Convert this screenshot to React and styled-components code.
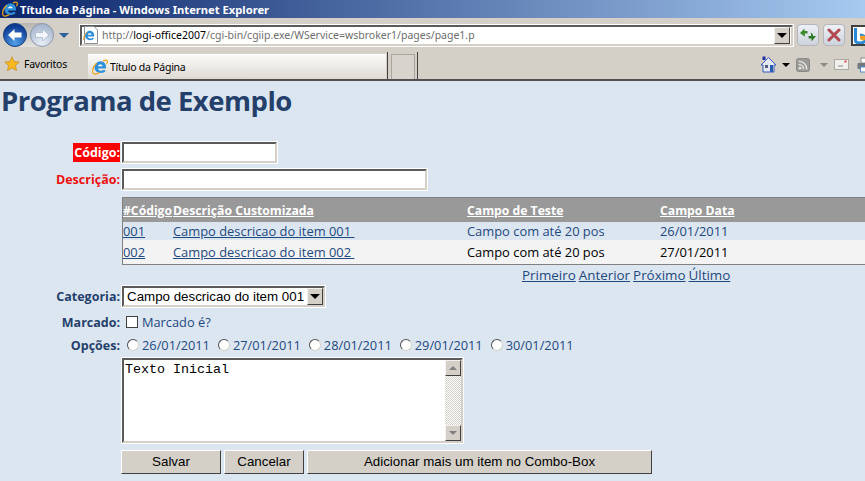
import React from "react";
import styled, { createGlobalStyle } from "styled-components";

const Global = createGlobalStyle`
  html, body { margin: 0; padding: 0; overflow: hidden; background: #dce6f1; }
`;

const IeLogo = ({ size = 16 }) => (
  <svg width={size} height={size} viewBox="0 0 16 16">
    <path d="M14 9.5H6C6.2 12 10 12.6 12 10.8L13.8 12C11 15.4 3.6 14.4 2.6 9.4C2 5.6 5 2.2 8.6 2.2C12 2.2 14.6 5 14 9.5Z" fill="#2f8fd8" />
    <path d="M6 7.2H10.6C10.4 4.8 6.4 4.8 6 7.2Z" fill="#fff" />
    <path d="M4.6 4.2C2 6.6 .2 10.6 .8 13.8C1.4 15.8 4.4 15.4 7.4 13.6M11 2C12.6 1 15.2 .4 15.4 2.4C15.5 3.4 15 4.4 14.6 5.2" fill="none" stroke="#eda31e" strokeWidth="1.2" />
  </svg>
);

const NavArrow = ({ back }) => (
  <svg width="24" height="24" viewBox="0 0 24 24">
    <defs>
      <radialGradient id="navBack" cx="50%" cy="85%" r="75%">
        <stop offset="0%" stopColor="#4f9fe8" />
        <stop offset="100%" stopColor="#0b3a92" />
      </radialGradient>
      <radialGradient id="navFwd" cx="50%" cy="85%" r="75%">
        <stop offset="0%" stopColor="#e8eef6" />
        <stop offset="100%" stopColor="#a9b8d0" />
      </radialGradient>
    </defs>
    <circle cx="12" cy="12" r="11.5" fill={back ? "url(#navBack)" : "url(#navFwd)"} stroke={back ? "#1c3f80" : "#8f99a8"} />
    <path
      d={back ? "M5 12L11.5 6V9.6H18.5V14.4H11.5V18Z" : "M19 12L12.5 6V9.6H5.5V14.4H12.5V18Z"}
      fill={back ? "#fff" : "#f4f7fb"}
      stroke={back ? "none" : "#9fb0c8"}
      strokeWidth="0.7"
    />
  </svg>
);

const PageIcon = () => (
  <svg width="16" height="18" viewBox="0 0 16 18">
    <path d="M1.5 .5H11L14.5 4V17.5H1.5Z" fill="#fff" stroke="#8a8f98" />
    <g transform="translate(0 3) scale(.8)">
      <path d="M14 9.5H6C6.2 12 10 12.6 12 10.8L13.8 12C11 15.4 3.6 14.4 2.6 9.4C2 5.6 5 2.2 8.6 2.2C12 2.2 14.6 5 14 9.5Z" fill="#2f8fd8" />
      <path d="M6 7.2H10.6C10.4 4.8 6.4 4.8 6 7.2Z" fill="#fff" />
      <path d="M4.6 4.2C2 6.6 .2 10.6 .8 13.8" fill="none" stroke="#f0a020" strokeWidth="1.2" />
    </g>
  </svg>
);

const RefreshIcon = () => (
  <svg width="18" height="16" viewBox="0 0 18 16">
    <path d="M1 6L5.5 1.5V4H8.5V6.5H6C5.6 7.2 5.8 8.4 6.4 9.6C4.6 9 4 7.6 4.4 6.4H4L5.5 9.5Z" fill="#3a8a2c" />
    <path d="M17 9L12.5 14.5V11.5H9.6V9H12C12.4 8 12.2 6.8 11.6 5.6C13.6 6.4 14.2 7.8 14 9Z" fill="#2d7a24" />
  </svg>
);

const StopIcon = () => (
  <svg width="14" height="14" viewBox="0 0 14 14">
    <path d="M2 2L12 12M12 2L2 12" stroke="#b04a50" strokeWidth="3" strokeLinecap="round" />
  </svg>
);

const Star = () => (
  <svg width="16" height="16" viewBox="0 0 16 16">
    <path d="M8 .8L10.1 5.6L15.3 6.1L11.4 9.5L12.6 14.7L8 12L3.4 14.7L4.6 9.5L.7 6.1L5.9 5.6Z" fill="#f8b820" stroke="#c88a18" strokeWidth=".7" />
  </svg>
);

const HomeIcon = () => (
  <svg width="17" height="17" viewBox="0 0 17 17">
    <path d="M8.5 1.5L16 9H14V16H3V9H1Z" fill="#e4e8f2" stroke="#3a58b8" />
    <rect x="2.5" y="0.5" width="3" height="3.5" fill="#2030a8" />
    <rect x="10" y="9" width="3" height="7" fill="#2a5cb0" />
    <rect x="5" y="9" width="3" height="3" fill="#50607a" />
  </svg>
);

const RssIcon = () => (
  <svg width="14" height="14" viewBox="0 0 14 14">
    <rect x=".5" y=".5" width="13" height="13" rx="2" fill="#9a9a96" stroke="#8a8a86" />
    <circle cx="4" cy="10.2" r="1.4" fill="#e2e0da" />
    <path d="M2.6 6.4C5.4 6.4 7.6 8.6 7.6 11.4M2.6 3.2C7.2 3.2 10.8 6.8 10.8 11.4" fill="none" stroke="#e2e0da" strokeWidth="1.5" />
  </svg>
);

const MailIcon = () => (
  <svg width="15" height="11" viewBox="0 0 15 11">
    <rect x=".5" y=".5" width="14" height="10" fill="#f0efec" stroke="#a8a8a4" />
    <path d="M4 7H9" stroke="#8a8a86" />
    <rect x="10.5" y="1.5" width="2" height="2" fill="#d84040" />
  </svg>
);

const PrintIcon = () => (
  <svg width="16" height="16" viewBox="0 0 16 16">
    <rect x="4" y="1" width="8" height="5" fill="#fff" stroke="#8a8a86" />
    <rect x=".5" y="6" width="15" height="6" rx="1" fill="#707880" />
    <rect x="3.5" y="10" width="9" height="5" fill="#fff" stroke="#5a8ac0" />
  </svg>
);

const BingIcon = () => (
  <svg width="16" height="18" viewBox="0 0 16 18">
    <path d="M2.5 1V14C2.5 16.5 10 16.5 11.5 14.5C13.5 12 12 8 7 8" fill="none" stroke="#2a8ad8" strokeWidth="3" />
    <ellipse cx="10" cy="11" rx="3" ry="2.4" fill="#f0a020" />
  </svg>
);

const App = () => (
  <Window>
    <Global />
    <TitleBar>
      <IeLogo />
      <TitleText>Título da Página - Windows Internet Explorer</TitleText>
    </TitleBar>
    <NavBar>
      <NavPill>
        <NavArrow back />
        <NavArrow />
      </NavPill>
      <Caret color="#2d5f98" />
      <AddressBar>
        <PageIcon />
        <Url>
          http://<strong>logi-office2007</strong>/cgi-bin/cgiip.exe/WService=wsbroker1/pages/page1.p
        </Url>
        <ComboButton>
          <Caret color="#000" />
        </ComboButton>
      </AddressBar>
      <RoundButton>
        <RefreshIcon />
      </RoundButton>
      <RoundButton>
        <StopIcon />
      </RoundButton>
      <BingBox>
        <BingIcon />
      </BingBox>
    </NavBar>
    <TabBar>
      <Favorites>
        <Star />
        <span>Favoritos</span>
      </Favorites>
      <Tab>
        <IeLogo />
        <span>Título da Página</span>
      </Tab>
      <NewTab />
      <CommandBar>
        <CommandItem><HomeIcon /></CommandItem>
        <CommandItem $left={5}><Caret color="#000" small /></CommandItem>
        <CommandItem $left={6}><RssIcon /></CommandItem>
        <CommandItem $left={10}><Caret color="#8a8a86" small /></CommandItem>
        <CommandItem $left={6}><MailIcon /></CommandItem>
        <CommandItem $left={8}><PrintIcon /></CommandItem>
      </CommandBar>
    </TabBar>
    <Page>
      <Heading>Programa de Exemplo</Heading>
      <Row $top={25}>
        <Label><Flag>Código:</Flag></Label>
        <Input $width={155} />
      </Row>
      <Row $top={6}>
        <Label $error>Descrição:</Label>
        <Input $width={305} />
      </Row>
      <Row $top={7}>
        <Label />
        <Grid>
          <thead>
            <tr>
              <Th $width={50}>#Código</Th>
              <Th $width={294}>Descrição Customizada</Th>
              <Th $width={193}>Campo de Teste</Th>
              <Th>Campo Data</Th>
            </tr>
          </thead>
          <tbody>
            {rows.map((row) => (
              <Tr key={row.code} $alt={row.alt}>
                <Td><Link>{row.code}</Link></Td>
                <Td><Link>{row.name}&nbsp;</Link></Td>
                <Td>Campo com até 20 pos</Td>
                <Td>{row.date}</Td>
              </Tr>
            ))}
          </tbody>
        </Grid>
      </Row>
      <Pager>
        <Link>Primeiro</Link>
        <Link>Anterior</Link>
        <Link>Próximo</Link>
        <Link>Último</Link>
      </Pager>
      <Row $top={2}>
        <Label>Categoria:</Label>
        <SelectBox>
          <span>Campo descricao do item 001</span>
          <ComboButton>
            <Caret color="#000" />
          </ComboButton>
        </SelectBox>
      </Row>
      <Row $top={6}>
        <Label>Marcado:</Label>
        <CheckBox />
        <Option>Marcado é?</Option>
      </Row>
      <Row $top={4}>
        <Label>Opções:</Label>
        <Radios>
          {dates.map((date) => (
            <RadioItem key={date}>
              <Radio />
              <Option>{date}</Option>
            </RadioItem>
          ))}
        </Radios>
      </Row>
      <Row $top={3}>
        <Label />
        <TextArea>
          <TextValue>Texto Inicial</TextValue>
          <ScrollTrack>
            <ScrollButton><Tri /></ScrollButton>
            <ScrollButton><Tri $down /></ScrollButton>
          </ScrollTrack>
        </TextArea>
      </Row>
      <Buttons>
        <Button $width={100}>Salvar</Button>
        <Button $width={80}>Cancelar</Button>
        <Button $width={345}>Adicionar mais um item no Combo-Box</Button>
      </Buttons>
    </Page>
  </Window>
);

export default App;

const rows = [
  { code: "001", name: "Campo descricao do item 001", date: "26/01/2011" },
  { code: "002", name: "Campo descricao do item 002", date: "27/01/2011", alt: true },
];

const dates = ["26/01/2011", "27/01/2011", "28/01/2011", "29/01/2011", "30/01/2011"];

const chrome = `"Noto Sans", sans-serif`;
const body = `"Open Sans", sans-serif`;
const navy = "#24406a";

const Window = styled.div`
  width: 865px;
  height: 481px;
  overflow: hidden;
  display: flex;
  flex-direction: column;
  background: #dce6f1;
`;

const TitleBar = styled.div`
  height: 18px;
  flex: none;
  display: flex;
  align-items: center;
  gap: 2px;
  padding-left: 2px;
  background: linear-gradient(90deg, #0a246a, #a6caf0);
`;

const TitleText = styled.span`
  font: bold 11.2px ${chrome};
  color: #fff;
`;

const NavBar = styled.div`
  height: 34px;
  flex: none;
  display: flex;
  align-items: center;
  background: #d4d0c8;
  padding-left: 3px;
  box-sizing: border-box;
`;

const NavPill = styled.div`
  display: flex;
  gap: 3px;
  width: 51px;
  flex: none;
  margin-right: 5px;
  border-radius: 12px;
  background: linear-gradient(#b8b6b0, #e4e2dc);
`;

const Caret = styled.span`
  display: inline-block;
  flex: none;
  width: 0;
  height: 0;
  border-left: ${(p) => (p.small ? 4 : 5)}px solid transparent;
  border-right: ${(p) => (p.small ? 4 : 5)}px solid transparent;
  border-top: ${(p) => (p.small ? 4 : 5)}px solid ${(p) => p.color};
`;

const AddressBar = styled.div`
  width: 713px;
  height: 21px;
  flex: none;
  box-sizing: border-box;
  margin-left: 11px;
  display: flex;
  align-items: center;
  gap: 3px;
  padding: 0 1px;
  background: #fff;
  border: 2px solid;
  border-color: #5a5a5a #d4d0c8 #d4d0c8 #5a5a5a;
  outline: 1px solid #fff;
`;

const Url = styled.span`
  flex: 1;
  font: 10.5px ${chrome};
  color: #6d6d6d;
  white-space: nowrap;
  strong { font-weight: normal; color: #000; }
`;

const ComboButton = styled.span`
  width: 16px;
  height: 17px;
  flex: none;
  box-sizing: border-box;
  display: flex;
  align-items: center;
  justify-content: center;
  background: #d4d0c8;
  border: 1px solid;
  border-color: #f4f2ee #404040 #404040 #f4f2ee;
`;

const RoundButton = styled.span`
  width: 22px;
  height: 22px;
  flex: none;
  box-sizing: border-box;
  margin-left: 4px;
  display: flex;
  align-items: center;
  justify-content: center;
  border: 1px solid #b4b6bc;
  border-radius: 4px;
  background: linear-gradient(#eef1f6, #cdd2dc);
`;

const BingBox = styled.span`
  width: 20px;
  height: 21px;
  flex: none;
  margin-left: 6px;
  background: #fff;
  border: 2px solid #404040;
  box-sizing: border-box;
  display: flex;
  overflow: hidden;
`;

const TabBar = styled.div`
  height: 29px;
  flex: none;
  display: flex;
  align-items: flex-end;
  background: #d4d0c8;
  border-bottom: 2px solid #505050;
  box-sizing: border-box;
`;

const Favorites = styled.div`
  width: 88px;
  height: 27px;
  flex: none;
  box-sizing: border-box;
  padding: 0 0 3px 4px;
  display: flex;
  align-items: center;
  gap: 4px;
  font: 10.5px ${chrome};
  letter-spacing: -0.25px;
  color: #000;
`;

const Tab = styled.div`
  width: 298px;
  height: 25px;
  flex: none;
  box-sizing: border-box;
  padding-left: 4px;
  display: flex;
  align-items: center;
  gap: 2px;
  font: 10.5px ${chrome};
  letter-spacing: -0.25px;
  color: #000;
  background: linear-gradient(#fbfaf8, #dedad3);
  border-top: 1px solid #fff;
`;

const NewTab = styled.div`
  width: 31px;
  height: 27px;
  margin-left: 1px;
  flex: none;
  box-sizing: border-box;
  border-left: 1px solid #404040;
  border-right: 1px solid #404040;
  padding: 2px 2px 0 3px;
  &::before {
    content: "";
    display: block;
    height: 100%;
    box-sizing: border-box;
    border: 1px solid #aaa69e;
    border-bottom: none;
    background: #d8d4cd;
  }
`;

const CommandBar = styled.div`
  margin-left: auto;
  width: 105px;
  height: 25px;
  flex: none;
  display: flex;
  align-items: center;
  overflow: hidden;
  padding-bottom: 4px;
  box-sizing: border-box;
`;

const CommandItem = styled.span`
  display: flex;
  flex: none;
  margin-left: ${(p) => p.$left || 0}px;
`;

const Page = styled.div`
  flex: 1;
  overflow: hidden;
  background: #dce6f1;
  font: 13px ${body};
  color: #1f497d;
`;

const Heading = styled.h1`
  margin: 4px 0 0 1px;
  font: bold 27.5px/32px ${body};
  letter-spacing: -0.5px;
  color: ${navy};
  white-space: nowrap;
`;

const Row = styled.div`
  display: flex;
  align-items: center;
  gap: 2px;
  margin-top: ${(p) => p.$top}px;
`;

const Label = styled.div`
  width: 120px;
  flex: none;
  display: flex;
  justify-content: flex-end;
  font-weight: bold;
  font-size: 12.5px;
  line-height: 19px;
  white-space: nowrap;
  color: ${(p) => (p.$error ? "#ee1111" : navy)};
`;

const Flag = styled.span`
  background: #f00;
  color: #fff;
  padding-left: 1px;
`;

const Input = styled.div`
  width: ${(p) => p.$width}px;
  height: 21px;
  box-sizing: border-box;
  background: #fff;
  border: 2px solid;
  border-color: #5a5a5a #d4d0c8 #d4d0c8 #5a5a5a;
  outline: 1px solid #fff;
`;

const Grid = styled.table`
  width: 800px;
  flex: none;
  border-collapse: collapse;
  border: 1px solid #808080;
  border-right: none;
  table-layout: fixed;
  font-size: 12.9px;
`;

const Th = styled.th`
  width: ${(p) => (p.$width ? `${p.$width}px` : "auto")};
  height: 24px;
  padding: 0;
  background: #999;
  color: #fff;
  font-size: 12.2px;
  font-weight: bold;
  text-align: left;
  text-decoration: underline;
  white-space: nowrap;
`;

const Tr = styled.tr`
  height: ${(p) => (p.$alt ? 24 : 18)}px;
  background: ${(p) => (p.$alt ? "#f3f3f3" : "#dce6f1")};
  color: ${(p) => (p.$alt ? "#000" : "#1f497d")};
`;

const Td = styled.td`
  padding: 0;
  white-space: nowrap;
  line-height: 16px;
`;

const Link = styled.span`
  color: #1f497d;
  text-decoration: underline;
`;

const Pager = styled.div`
  display: flex;
  gap: 3px;
  height: 18px;
  margin: 1px 0 0 522px;
  font-size: 13.4px;
  align-items: center;
  white-space: nowrap;
`;

const SelectBox = styled.div`
  width: 203px;
  height: 21px;
  box-sizing: border-box;
  display: flex;
  align-items: center;
  justify-content: space-between;
  padding-left: 3px;
  background: #fff;
  border: 2px solid;
  border-color: #5a5a5a #d4d0c8 #d4d0c8 #5a5a5a;
  outline: 1px solid #fff;
  font: 13.33px "Liberation Sans", sans-serif;
  color: #000;
  white-space: nowrap;
`;

const CheckBox = styled.span`
  width: 12px;
  height: 12px;
  margin: 0 2px 0 4px;
  flex: none;
  box-sizing: border-box;
  background: #fff;
  border: 1px solid #404040;
`;

const Option = styled.span`
  font-size: 12.8px;
  color: #1f497d;
  white-space: nowrap;
`;

const Radios = styled.div`
  display: flex;
  gap: 8px;
  margin-left: 5px;
`;

const RadioItem = styled.div`
  display: flex;
  align-items: center;
  gap: 3px;
`;

const Radio = styled.span`
  width: 12px;
  height: 12px;
  flex: none;
  box-sizing: border-box;
  border-radius: 50%;
  background: #fff;
  border: 1px solid;
  border-color: #505050 #d4d0c8 #d4d0c8 #505050;
`;

const TextArea = styled.div`
  width: 341px;
  height: 85px;
  box-sizing: border-box;
  display: flex;
  justify-content: space-between;
  background: #fff;
  border: 2px solid;
  border-color: #5a5a5a #d4d0c8 #d4d0c8 #5a5a5a;
  outline: 1px solid #fff;
`;

const TextValue = styled.span`
  padding: 2px 0 0 1px;
  font: 13.33px/15px "Liberation Mono", monospace;
  color: #000;
`;

const ScrollTrack = styled.div`
  width: 16px;
  display: flex;
  flex-direction: column;
  justify-content: space-between;
  background: repeating-conic-gradient(#d4d0c8 0 25%, #fff 0 50%) 0 0 / 2px 2px;
`;

const ScrollButton = styled.span`
  height: 16px;
  box-sizing: border-box;
  display: flex;
  align-items: center;
  justify-content: center;
  background: #d4d0c8;
  border: 1px solid;
  border-color: #f4f2ee #404040 #404040 #f4f2ee;
`;

const Tri = styled.span`
  width: 0;
  height: 0;
  border-left: 4px solid transparent;
  border-right: 4px solid transparent;
  border-${(p) => (p.$down ? "top" : "bottom")}: 4px solid #808080;
`;

const Buttons = styled.div`
  display: flex;
  gap: 3px;
  margin: 7px 0 0 121px;
`;

const Button = styled.button`
  width: ${(p) => p.$width}px;
  height: 24px;
  padding: 0;
  background: #d4d0c8;
  border: 1px solid;
  border-color: #fff #404040 #404040 #fff;
  font: 13.33px "Liberation Sans", sans-serif;
  color: #000;
`;
